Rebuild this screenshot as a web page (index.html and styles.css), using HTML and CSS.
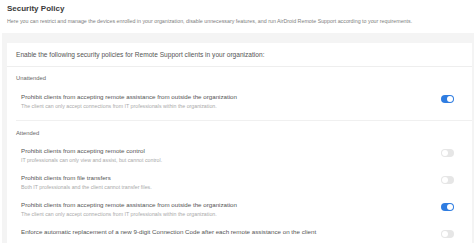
FILE: index.html
```html
<!DOCTYPE html>
<html>
<head>
<meta charset="utf-8">
<link rel="stylesheet" href="styles.css">
</head>
<body>
<div class="page">
  <div class="title">Security Policy</div>
  <div class="desc">Here you can restrict and manage the devices enrolled in your organization, disable unnecessary features, and run AirDroid Remote Support according to your requirements.</div>
  <div class="panel">
    <div class="card">
      <div class="card-head">Enable the following security policies for Remote Support clients in your organization:</div>
      <div class="section">
        <div class="label">Unattended</div>
        <div class="row">
          <div class="text">
            <div class="rt">Prohibit clients from accepting remote assistance from outside the organization</div>
            <div class="rs">The client can only accept connections from IT professionals within the organization.</div>
          </div>
          <span class="toggle on"></span>
        </div>
      </div>
      <div class="section last">
        <div class="label">Attended</div>
        <div class="row">
          <div class="text">
            <div class="rt">Prohibit clients from accepting remote control</div>
            <div class="rs">IT professionals can only view and assist, but cannot control.</div>
          </div>
          <span class="toggle"></span>
        </div>
        <div class="row">
          <div class="text">
            <div class="rt">Prohibit clients from file transfers</div>
            <div class="rs">Both IT professionals and the client cannot transfer files.</div>
          </div>
          <span class="toggle"></span>
        </div>
        <div class="row">
          <div class="text">
            <div class="rt">Prohibit clients from accepting remote assistance from outside the organization</div>
            <div class="rs">The client can only accept connections from IT professionals within the organization.</div>
          </div>
          <span class="toggle on"></span>
        </div>
        <div class="row">
          <div class="text">
            <div class="rt">Enforce automatic replacement of a new 9-digit Connection Code after each remote assistance on the client</div>
          </div>
          <span class="toggle"></span>
        </div>
      </div>
    </div>
  </div>
</div>
</body>
</html>
```
FILE: styles.css
```css
html, body {
  margin: 0;
  padding: 0;
  background: #ffffff;
}
body {
  font-family: "Liberation Sans", Arial, sans-serif;
  color: #555;
  width: 474px;
  height: 249px;
  overflow: hidden;
}
.page {
  display: flex;
  flex-direction: column;
}
.title {
  margin: 4px 0 0 7px;
  font-size: 8px;
  line-height: 10px;
  font-weight: bold;
  color: #3a3a3a;
}
.desc {
  margin: 3px 0 0 7px;
  font-size: 5.3px;
  line-height: 8px;
  color: #808080;
  white-space: nowrap;
}
.panel {
  margin: 8px 0 0 2px;
  width: 465px;
  height: 200px;
  padding: 10px 2px 0 5px;
  background: #f4f4f4;
}
.card {
  background: #fff;
  height: 200px;
  display: flex;
  flex-direction: column;
}
.card-head {
  height: 23px;
  line-height: 23px;
  padding-left: 9px;
  font-size: 6.6px;
  color: #555;
  border-bottom: 1px solid #eeeeee;
  white-space: nowrap;
}
.section {
  margin-left: 9px;
  padding: 7px 0 10px 0;
  border-bottom: 1px solid #f0f0f0;
}
.section.last {
  border-bottom: none;
  padding-top: 8px;
}
.label {
  font-size: 5.8px;
  line-height: 8px;
  color: #666;
}
.row {
  display: flex;
  align-items: flex-start;
  justify-content: space-between;
  padding-left: 5px;
  padding-right: 18px;
  margin-top: 11px;
}
.section.last .row {
  margin-top: 10px;
}
.rt {
  font-size: 6.2px;
  line-height: 8px;
  color: #555;
  white-space: nowrap;
}
.rs {
  margin-top: 1px;
  font-size: 5.25px;
  line-height: 8px;
  color: #aaaaaa;
  white-space: nowrap;
}
.toggle {
  position: relative;
  flex: none;
  width: 13px;
  height: 8px;
  margin-top: 2px;
  border-radius: 4px;
  background: #e6e6e6;
}
.toggle::after {
  content: "";
  position: absolute;
  top: 1px;
  left: 1px;
  width: 6px;
  height: 6px;
  border-radius: 50%;
  background: #fff;
}
.toggle.on {
  background: #2f7de1;
}
.toggle.on::after {
  left: 6px;
}
```
